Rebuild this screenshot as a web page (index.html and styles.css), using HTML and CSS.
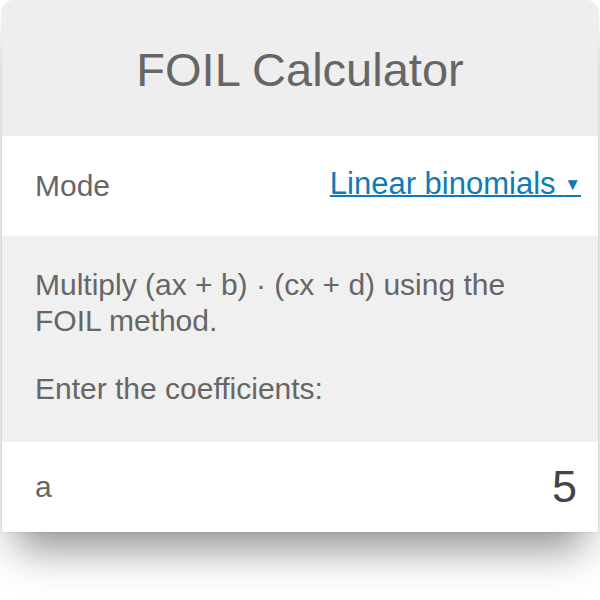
FILE: index.html
```html
<!DOCTYPE html>
<html>
<head>
<meta charset="utf-8">
<link rel="stylesheet" href="styles.css">
</head>
<body>
<div class="card">
  <header class="head"><h1 class="title">FOIL Calculator</h1></header>
  <div class="row mode-row">
    <span class="label">Mode</span>
    <a class="select" href="#">Linear binomials <span class="caret">▼</span></a>
  </div>
  <div class="desc">
    <p>Multiply (ax + b) · (cx + d) using the FOIL method.</p>
    <p>Enter the coefficients:</p>
  </div>
  <div class="row input-row">
    <span class="label">a</span>
    <span class="value">5</span>
  </div>
</div>
</body>
</html>
```
FILE: styles.css
```css
html, body {
  margin: 0;
  padding: 0;
  background: #ffffff;
}
body {
  font-family: "Liberation Sans", Arial, sans-serif;
  color: #666666;
  width: 600px;
  height: 600px;
  overflow: hidden;
}
.card {
  margin: 0 2px;
  border-radius: 14px 14px 0 0;
  overflow: hidden;
  box-shadow: 0 0 2px rgba(0,0,0,0.18), 0 30px 40px -14px rgba(0,0,0,0.45);
  background: #ffffff;
}
.head {
  background: #eeeeee;
  height: 136px;
  display: flex;
  align-items: center;
  justify-content: center;
}
.title {
  margin: 0;
  font-weight: normal;
  font-size: 47px;
  color: #666666;
  padding-top: 3px;
}
.row {
  display: flex;
  align-items: center;
  justify-content: space-between;
  padding: 0 17px 0 33px;
  background: #ffffff;
}
.mode-row {
  height: 100px;
}
.label {
  font-size: 30px;
  color: #666666;
}
.select {
  color: #0f7ab5;
  font-size: 31px;
  text-decoration: underline;
  text-decoration-thickness: 2px;
  text-decoration-skip-ink: none;
  margin-top: -4px;
}
.caret {
  font-size: 17px;
  vertical-align: 4px;
}
.desc {
  background: #f0f0f0;
  padding: 31px 33px 0;
  height: 175px;
}
.desc p {
  margin: 0 0 32px;
  max-width: 500px;
  font-size: 30px;
  line-height: 36px;
}
.input-row {
  height: 90px;
  padding-right: 21px;
}
.value {
  font-size: 45px;
  color: #444444;
}
```
